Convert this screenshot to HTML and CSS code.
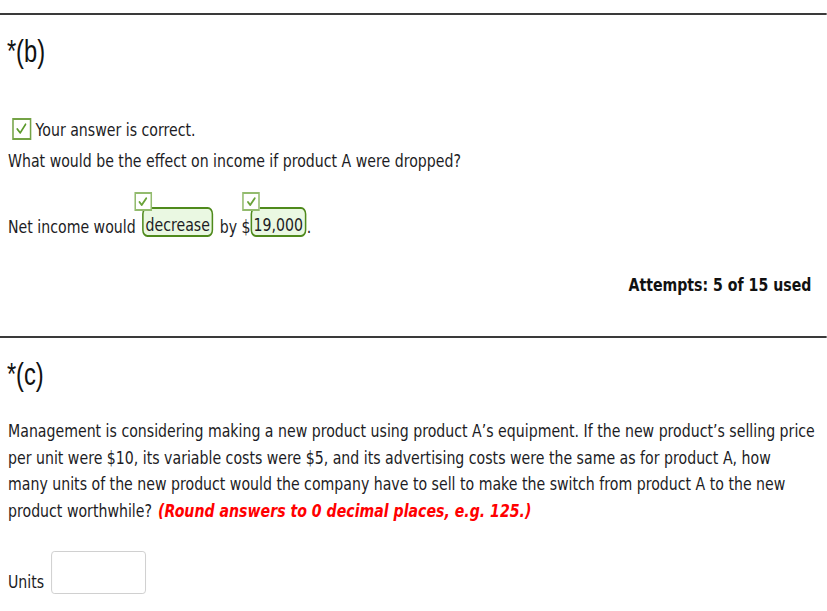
FILE: index.html
```html
<!DOCTYPE html>
<html lang="en">
<head>
<meta charset="utf-8">
<title>Question parts</title>
<link rel="stylesheet" href="styles.css">
</head>
<body>
<div class="page">
  <div class="rule rule-top"></div>
  <section class="part">
    <h2 class="part-title">*(b)</h2>
    <div class="part-body">
      <div class="feedback">
        <span class="check-box"><svg class="check-svg" viewBox="0 0 20 18" width="16" height="14"><polyline points="3,9 8,14 17,3" fill="none" stroke="#5c9a2c" stroke-width="2.6" stroke-linecap="round" stroke-linejoin="round"/></svg></span>
        <span>Your answer is correct.</span>
      </div>
      <p class="question">What would be the effect on income if product A were dropped?</p>
      <p class="answer-line">Net income would <span class="answer answer-word"><span class="answer-check"><svg viewBox="0 0 20 16" width="16" height="12"><polyline points="4,8 8,12 16,3" fill="none" stroke="#6aa33a" stroke-width="2.8" stroke-linecap="round" stroke-linejoin="round"/></svg></span>decrease</span> by $<span class="answer answer-num"><span class="answer-check"><svg viewBox="0 0 20 16" width="16" height="12"><polyline points="4,8 8,12 16,3" fill="none" stroke="#6aa33a" stroke-width="2.8" stroke-linecap="round" stroke-linejoin="round"/></svg></span>19,000</span>.</p>
      <div class="attempts">Attempts: 5 of 15 used</div>
    </div>
  </section>
  <div class="rule rule-mid"></div>
  <section class="part">
    <h2 class="part-title">*(c)</h2>
    <div class="part-body">
      <p class="prompt">Management is considering making a new product using product A’s equipment. If the new product’s selling price per unit were $10, its variable costs were $5, and its advertising costs were the same as for product A, how<br>many units of the new product would the company have to sell to make the switch from product A to the new product worthwhile? <em class="hint">(Round answers to 0 decimal places, e.g. 125.)</em></p>
      <div class="units-row">
        <label class="units-label" for="units">Units</label>
        <input class="units-input" id="units" type="text">
      </div>
    </div>
  </section>
</div>
</body>
</html>
```

FILE: styles.css
```css
html, body {
  margin: 0;
  padding: 0;
  background: #ffffff;
  overflow-x: hidden;
}

.page {
  width: 1082px;
  transform: scaleX(0.764);
  transform-origin: 0 0;
  font-family: "DejaVu Sans", Verdana, sans-serif;
  font-size: 18.5px;
  color: #1c1c24;
}

.rule {
  height: 0;
  border-top: 2px solid #3a3a3a;
}

.rule-top {
  margin-top: 13px;
}

.rule-mid {
  margin-top: 36px;
}

.part-title {
  font-family: "Liberation Sans", Arial, sans-serif;
  font-weight: normal;
  font-size: 31px;
  line-height: 40px;
  margin: 17px 0 0;
  padding-left: 9px;
  color: #111;
}

.part-body {
  padding: 0 20px 0 10.5px;
}

.feedback {
  display: flex;
  align-items: center;
  height: 30px;
  margin-top: 42px;
}

.check-box {
  width: 25px;
  height: 22px;
  box-sizing: border-box;
  border: 2px solid #74a346;
  background: #fff;
  display: flex;
  align-items: center;
  justify-content: center;
  margin-left: 5px;
  margin-right: 6px;
}

.question {
  margin: 2px 0 0;
  line-height: 30px;
}

.answer-line {
  margin: 31px 0 0;
  line-height: 30px;
}

.answer {
  position: relative;
  display: inline-block;
  line-height: 20px;
  padding: 6px 2px 0;
  border: 2px solid #4f8a1c;
  border-radius: 7px;
  background: #eaf8e2;
  vertical-align: 2px;
}

.answer-word {
  margin: 0 3px 0 3px;
}

.answer-num {
  margin-right: 1px;
}

.answer-check {
  position: absolute;
  left: -12.5px;
  top: -17px;
  width: 23px;
  height: 19px;
  box-sizing: border-box;
  border: 2px solid #93bb6e;
  background: #fff;
  display: flex;
  align-items: center;
  justify-content: center;
}

.attempts {
  text-align: right;
  font-weight: bold;
  line-height: 30px;
  margin-top: 28px;
  color: #111;
}

.prompt {
  margin: 23px -10px 0 0;
  line-height: 26.7px;
}

.hint {
  color: #ff0000;
  font-weight: bold;
  font-style: italic;
  margin-left: 2px;
}

.units-row {
  display: flex;
  align-items: flex-end;
  margin-top: 26px;
}

.units-label {
  line-height: 24px;
}

.units-input {
  width: 124px;
  height: 43px;
  box-sizing: border-box;
  margin: 0 0 0 9px;
  padding: 0 6px;
  border: 1px solid #c9c9c9;
  border-radius: 4px;
  background: #fff;
  font: inherit;
}
```
